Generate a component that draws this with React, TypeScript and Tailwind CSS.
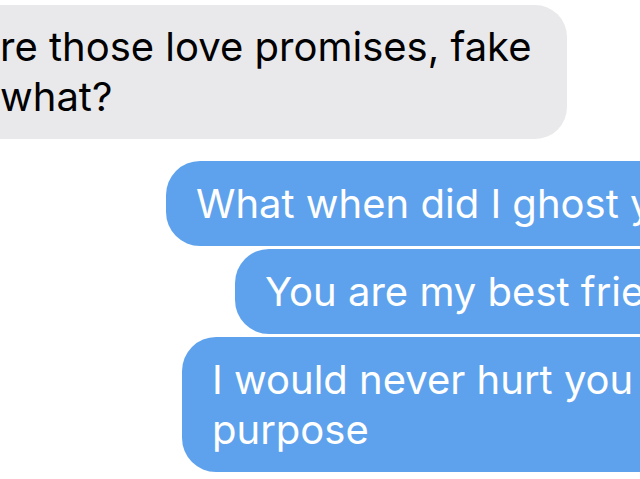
import React from 'react';

const font = { fontFamily: 'Inter, "Noto Sans", sans-serif' };

const Incoming: React.FC<{ lines: string[] }> = ({ lines }) => (
    <div className="ml-[-40px] w-[607px] rounded-[32px] bg-[#e9e9eb] pl-[40px] pr-[30px] py-[17px] text-[40px] leading-[50px] text-black whitespace-nowrap">
        {lines.map((l, i) => <div key={i}>{l}</div>)}
    </div>
);

const Outgoing: React.FC<{ lines: string[]; offset: string }> = ({ lines, offset }) => (
    <div className={`${offset} w-[600px] rounded-[34px] bg-[#5ea2ed] pl-[30px] py-[17.5px] text-[40px] leading-[50px] text-white whitespace-nowrap`}>
        {lines.map((l, i) => <div key={i}>{l}</div>)}
    </div>
);

export default function App() {
    return (
        <div className="w-[640px] h-[479px] overflow-hidden bg-white pt-[5px]" style={font}>
            <Incoming lines={['re those love promises, fake', 'what?']} />
            <div className="mt-[22px] flex flex-col gap-[3px]">
                <Outgoing offset="ml-[166px]" lines={['What when did I ghost you?']} />
                <Outgoing offset="ml-[235px]" lines={['You are my best friend']} />
                <Outgoing offset="ml-[182px]" lines={['I would never hurt you on', 'purpose']} />
            </div>
        </div>
    );
}
